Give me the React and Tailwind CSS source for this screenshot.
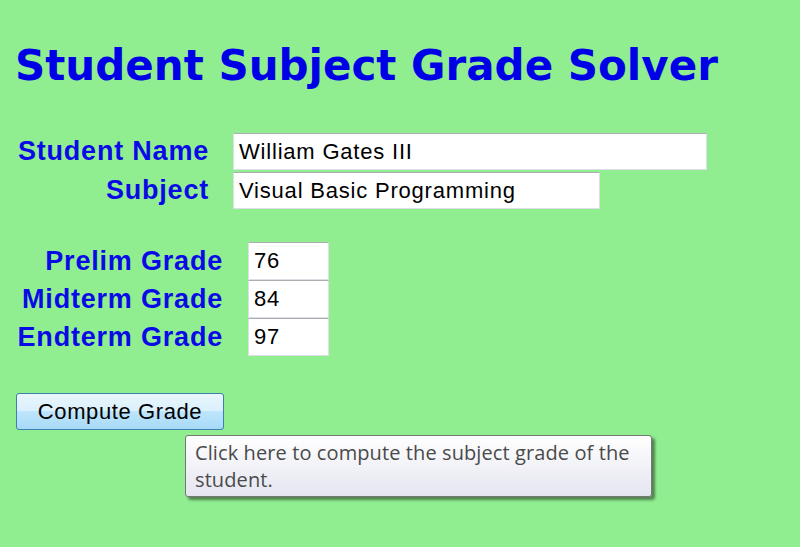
import React from "react";

const nameRows = [
  { label: "Student Name", value: "William Gates III", width: "w-[474px]" },
  { label: "Subject", value: "Visual Basic Programming", width: "w-[367px]" },
];

const gradeRows = [
  { label: "Prelim Grade", value: "76" },
  { label: "Midterm Grade", value: "84" },
  { label: "Endterm Grade", value: "97", focused: true },
];

const labelCls =
  "text-right font-['Liberation_Sans',Arial,sans-serif] text-[27px] font-bold leading-none tracking-[0.8px] text-[#0a0ae6]";

const inputCls =
  "border border-[#dbdfe6] border-t-[#abadb3] bg-white px-[5px] font-['Liberation_Sans',Arial,sans-serif] text-[22px] leading-none tracking-[0.8px] text-black outline-none";

export default function App() {
  return (
    <div className="min-h-screen w-full bg-[#90ee90] pl-[15px] pt-[45px]">
      <h1 className="font-['DejaVu_Sans',sans-serif] text-[42px] font-bold leading-none text-[#0000e6]">
        Student Subject Grade Solver
      </h1>

      {/* name + subject */}
      <div className="mt-[46px] grid grid-cols-[194px_auto] gap-x-[24px] gap-y-[2px]">
        {nameRows.map((row) => (
          <React.Fragment key={row.label}>
            <div className={`${labelCls} self-center`}>{row.label}</div>
            <input
              readOnly
              value={row.value}
              className={`${inputCls} ${row.width} h-[37px]`}
            />
          </React.Fragment>
        ))}
      </div>

      {/* grades */}
      <div className="mt-[33px] grid grid-cols-[208px_auto] gap-x-[25px] gap-y-0">
        {gradeRows.map((row) => (
          <React.Fragment key={row.label}>
            <div className={`${labelCls} self-center`}>{row.label}</div>
            <input
              readOnly
              value={row.value}
              className={`${inputCls} h-[38px] w-[81px] ${
                row.focused ? "border-[#c5daed] border-t-[#3d7bad]" : ""
              }`}
            />
          </React.Fragment>
        ))}
      </div>

      {/* button + tooltip */}
      <div className="relative ml-[1px] mt-[37px] w-fit">
        <button className="h-[37px] w-[208px] rounded-[3px] border border-[#3c7fb1] bg-[linear-gradient(#eaf6fd_0%,#d9f0fc_50%,#bee6fd_50%,#a7d9f5_100%)] font-['Liberation_Sans',Arial,sans-serif] text-[22px] leading-none tracking-[0.6px] text-black">
          Compute Grade
        </button>

        <div className="absolute left-[169px] top-[42px] w-[467px] rounded-[3px] border border-[#767676] bg-[linear-gradient(#ffffff,#e4e5f0)] px-[9px] pb-[3px] pt-[3px] font-['Open_Sans',sans-serif] text-[20px] leading-[27px] tracking-[0.1px] text-[#4a4a4a] shadow-[3px_3px_3px_rgba(0,0,0,0.45)]">
          Click here to compute the subject grade of the student.
        </div>
      </div>
    </div>
  );
}
